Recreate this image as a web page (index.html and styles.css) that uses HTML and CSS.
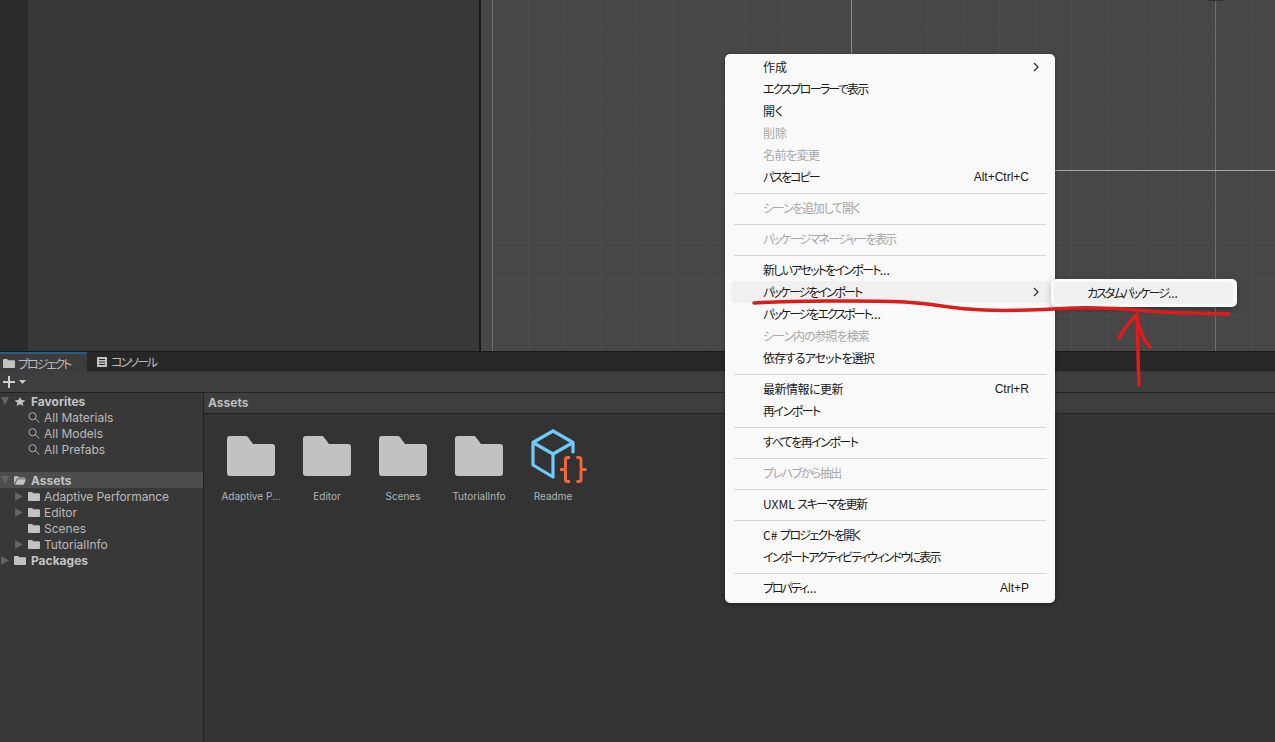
FILE: index.html
```html
<!DOCTYPE html>
<html lang="ja">
<head>
    <meta charset="UTF-8">
    <title>Unity - パッケージをインポート</title>
    <link rel="stylesheet" href="styles.css">
</head>
<body>

    <svg width="0" height="0" class="defs">
        <symbol id="folder" viewBox="0 0 12 9"><path d="M1 0h3.200l1.100 1.300H11a1 1 0 0 1 1 1V8a1 1 0 0 1-1 1H1a1 1 0 0 1-1-1V1a1 1 0 0 1 1-1z"/></symbol>
        <symbol id="folder-big" viewBox="0 0 48 40"><path d="M3 0h15.500a3 3 0 0 1 2.500 1.300L26 8h19a3 3 0 0 1 3 3v26a3 3 0 0 1-3 3H3a3 3 0 0 1-3-3V3a3 3 0 0 1 3-3z"/></symbol>
        <symbol id="search" viewBox="0 0 12 11"><circle cx="4.500" cy="4.200" r="3.600" fill="none" stroke="currentColor"/><path d="M7.200 6.800l4.300 3.800" fill="none" stroke="currentColor"/></symbol>
        <symbol id="caret-right" viewBox="0 0 8 9"><path d="M0 0l8 4.500-8 4.500z"/></symbol>
        <symbol id="caret-down" viewBox="0 0 8 8"><path d="M0 0h8L4 8z"/></symbol>
        <symbol id="caret-small" viewBox="0 0 7 4"><path d="M0 0h7L3.500 4z"/></symbol>
        <symbol id="chevron" viewBox="0 0 7 10"><path d="M1 1l4 4-4 4" fill="none" stroke="currentColor" stroke-width="1.300"/></symbol>
    </svg>

    <!-- top: hierarchy + scene -->
    <div class="top">
        <div class="strip"></div>
        <div class="hierarchy"></div>
        <div class="scene"></div>
    </div>

    <!-- bottom: project window -->
    <div class="bottom">
        <div class="tabs">
            <div class="tab active">
                <svg class="tab-icon"><use href="#folder"/></svg>
                <span>プロジェクト</span>
            </div>
            <div class="tab">
                <svg class="tab-icon doc" viewBox="0 0 10 10"><path d="M0 0h10v10H0z" fill="currentColor"/><path d="M2 2.500h6M2 5h6M2 7.500h6" stroke="#282828"/></svg>
                <span>コンソール</span>
            </div>
        </div>
        <div class="toolbar">
            <svg class="plus" viewBox="0 0 12 12"><path d="M6 0v12M0 6h12" stroke="currentColor" stroke-width="2"/></svg>
            <svg class="drop"><use href="#caret-small"/></svg>
        </div>
        <div class="browser">
            <div class="sidebar">
                <div class="row top-row">
                    <svg class="caret down"><use href="#caret-down"/></svg>
                    <svg class="icon" viewBox="0 0 12 10"><path d="M6 0l1.800 3.400 4.200.4-3.100 2.700.9 3.500L6 8.100 2.200 10l.9-3.500L0 3.800l4.200-.4z"/></svg>
                    <span class="bold">Favorites</span>
                </div>
                <div class="row sub"><span class="caret"></span><svg class="icon search"><use href="#search"/></svg><span>All Materials</span></div>
                <div class="row sub"><span class="caret"></span><svg class="icon search"><use href="#search"/></svg><span>All Models</span></div>
                <div class="row sub"><span class="caret"></span><svg class="icon search"><use href="#search"/></svg><span>All Prefabs</span></div>

                <div class="row top-row selected group">
                    <svg class="caret down"><use href="#caret-down"/></svg>
                    <svg class="icon" viewBox="0 0 13 9"><path d="M1 0h3.200l1.100 1.300H11a1 1 0 0 1 1 1H3.200L0 8.500V1a1 1 0 0 1 1-1z"/><path d="M3.800 3.200H13L10.500 9H.9z"/></svg>
                    <span class="bold">Assets</span>
                </div>
                <div class="row sub">
                    <svg class="caret"><use href="#caret-right"/></svg>
                    <svg class="icon"><use href="#folder"/></svg>
                    <span class="tight">Adaptive Performance</span>
                </div>
                <div class="row sub">
                    <svg class="caret"><use href="#caret-right"/></svg>
                    <svg class="icon"><use href="#folder"/></svg>
                    <span>Editor</span>
                </div>
                <div class="row sub"><span class="caret"></span><svg class="icon"><use href="#folder"/></svg><span>Scenes</span></div>
                <div class="row sub">
                    <svg class="caret"><use href="#caret-right"/></svg>
                    <svg class="icon"><use href="#folder"/></svg>
                    <span>TutorialInfo</span>
                </div>
                <div class="row top-row">
                    <svg class="caret"><use href="#caret-right"/></svg>
                    <svg class="icon"><use href="#folder"/></svg>
                    <span class="bold">Packages</span>
                </div>
            </div>
            <div class="main">
                <div class="crumb">Assets</div>
                <div class="grid">
                    <div class="cell"><svg class="big"><use href="#folder-big"/></svg><span>Adaptive P...</span></div>
                    <div class="cell"><svg class="big"><use href="#folder-big"/></svg><span>Editor</span></div>
                    <div class="cell"><svg class="big"><use href="#folder-big"/></svg><span>Scenes</span></div>
                    <div class="cell"><svg class="big"><use href="#folder-big"/></svg><span>TutorialInfo</span></div>
                    <div class="cell">
                        <svg class="big readme" viewBox="0 0 80 70">
                            <path d="M33 11L13 22.500V45L33 57V34L13 22.500M33 34L53 22.500 33 11M53 22.500V32" fill="none" stroke="#6fcbfb" stroke-width="3.200" stroke-linejoin="round" stroke-linecap="round"/>
                            <path d="M50 37.500h-2.500q-2 0-2 2v8q0 2-2 2h-3.500h3.500q2 0 2 2v8q0 2 2 2h2.500M56.500 37.500h2.500q2 0 2 2v8q0 2 2 2h3.500h-3.500q-2 0-2 2v8q0 2-2 2h-2.500" fill="none" stroke="#f4663a" stroke-width="3"/>
                        </svg>
                        <span class="readme-label">Readme</span>
                    </div>
                </div>
            </div>
        </div>
    </div>

    <!-- context menu -->
    <div class="menu">
        <div class="item"><span>作成</span><svg class="chev"><use href="#chevron"/></svg></div>
        <div class="item"><span class="ls18">エクスプローラーで表示</span></div>
        <div class="item"><span>開く</span></div>
        <div class="item off"><span>削除</span></div>
        <div class="item off"><span class="ls05">名前を変更</span></div>
        <div class="item"><span class="ls20">パスをコピー</span><span class="key">Alt+Ctrl+C</span></div>
        <div class="sep"></div>
        <div class="item off"><span class="ls12">シーンを追加して開く</span></div>
        <div class="sep"></div>
        <div class="item off"><span class="ls18">パッケージマネージャーを表示</span></div>
        <div class="sep"></div>
        <div class="item"><span class="ls18">新しいアセットをインポート<span class="plain">...</span></span></div>
        <div class="item hover"><span class="ls20">パッケージをインポート</span><svg class="chev"><use href="#chevron"/></svg></div>
        <div class="item"><span class="ls20">パッケージをエクスポート<span class="plain">...</span></span></div>
        <div class="item off"><span class="ls10">シーン内の参照を検索</span></div>
        <div class="item"><span class="ls10">依存するアセットを選択</span></div>
        <div class="sep"></div>
        <div class="item"><span class="ls05">最新情報に更新</span><span class="key">Ctrl+R</span></div>
        <div class="item"><span class="ls15">再インポート</span></div>
        <div class="sep"></div>
        <div class="item"><span class="ls15">すべてを再インポート</span></div>
        <div class="sep"></div>
        <div class="item off"><span class="ls15">プレハブから抽出</span></div>
        <div class="sep"></div>
        <div class="item"><span class="ls15"><span class="plain">UXML </span>スキーマを更新</span></div>
        <div class="sep"></div>
        <div class="item"><span class="ls18"><span class="plain">C# </span>プロジェクトを開く</span></div>
        <div class="item"><span class="ls18">インポートアクティビティウィンドウに表示</span></div>
        <div class="sep"></div>
        <div class="item"><span class="ls20">プロパティ<span class="plain">...</span></span><span class="key">Alt+P</span></div>
    </div>

    <div class="submenu">
        <div class="item hover"><span class="ls20">カスタムパッケージ<span class="plain">...</span></span></div>
    </div>

    <!-- hand drawn annotation -->
    <svg class="scribble" viewBox="0 0 1275 742">
        <path d="M754 303C790 301 860 300 905 302C935 304 950 308 968 309C1000 312 1040 310 1074 308C1100 307 1120 309 1138 310C1160 313 1200 313 1229 314" />
        <path d="M1137 314C1138 340 1138 365 1139 385" />
        <path d="M1119 338C1125 328 1131 320 1136 315C1139 325 1141 338 1150 347" />
    </svg>

</body>
</html>
```

FILE: styles.css
```css
html, body {
    margin: 0;
    height: 100%;
    overflow: hidden;
}
body {
    display: flex;
    flex-direction: column;
    background-color: #333333;
    font-family: Inter, "Liberation Sans", sans-serif;
    font-size: 12px;
    color: #c0c0c0;
}
.defs {
    position: absolute;
}

/* top area */
.top {
    display: flex;
    height: 351px;
    flex-shrink: 0;
}
.strip {
    width: 28px;
    background-color: #2b2b2b;
}
.hierarchy {
    width: 451px;
    background-color: #383838;
}
.scene {
    flex: 1;
    border-left: 2px solid #191919;
    background-color: #474747;
    background-image:
        linear-gradient(#a8a8a8, #a8a8a8),
        linear-gradient(#333333, #333333),
        linear-gradient(90deg, #8a8a8a 1px, transparent 1px),
        linear-gradient(90deg, #6e6e6e 1px, transparent 1px),
        linear-gradient(90deg, #6e6e6e 1px, transparent 1px),
        linear-gradient(90deg, #4d4d4d 1px, transparent 1px),
        linear-gradient(#4d4d4d 1px, transparent 1px);
    background-size:
        424px 1px,
        16px 1px,
        1px 100%,
        1px 100%,
        1px 100%,
        36.2px 36.2px,
        36.2px 36.2px;
    background-position:
        370px 170px,
        726px 0,
        370px 0,
        11px 0,
        734px 0,
        11px 0,
        0 25px;
    background-repeat: no-repeat, no-repeat, no-repeat, no-repeat, no-repeat, repeat, repeat;
}

/* project window */
.bottom {
    flex: 1;
    display: flex;
    flex-direction: column;
    min-height: 0;
    border-top: 1px solid #191919;
}
.tabs {
    display: flex;
    height: 19px;
    background-color: #282828;
    border-bottom: 1px solid #3a3a3a;
}
.tab {
    display: flex;
    align-items: center;
    height: 19px;
    font-family: "Noto Sans CJK JP", sans-serif;
    font-feature-settings: "palt";
    font-size: 12px;
    letter-spacing: -2px;
    color: #bdbdbd;
}
.tab.active {
    width: 87px;
    box-sizing: border-box;
    border-top: 2px solid #2c5d87;
    background-color: #3c3c3c;
    height: 20px;
    padding-left: 3px;
}
.tab:not(.active) {
    padding-left: 10px;
}
.tab-icon {
    width: 12px;
    height: 9px;
    margin-right: 3px;
    fill: #c2c2c2;
}
.tab-icon.doc {
    width: 10px;
    height: 10px;
    margin-right: 4px;
    color: #c2c2c2;
}
.toolbar {
    display: flex;
    align-items: center;
    height: 20px;
    padding-left: 3px;
    background-color: #3e3e3e;
    border-bottom: 1px solid #232323;
    color: #d0d0d0;
}
.plus {
    width: 12px;
    height: 12px;
}
.drop {
    width: 7px;
    height: 4px;
    margin-left: 4px;
    fill: #c8c8c8;
}
.browser {
    flex: 1;
    display: flex;
    min-height: 0;
}

/* tree */
.sidebar {
    width: 203px;
    flex-shrink: 0;
    background-color: #383838;
    border-right: 1px solid #232323;
}
.row {
    display: flex;
    align-items: center;
    height: 16px;
    line-height: 16px;
    color: #b8b8b8;
}
.row > span:last-child {
    padding-top: 2px;
}
.row.top-row {
    padding-left: 1px;
}
.row.sub {
    padding-left: 15px;
}
.row.group {
    margin-top: 15px;
}
.row.selected {
    background-color: #4d4d4d;
}
.caret {
    width: 8px;
    height: 9px;
    margin-right: 5px;
    fill: #646464;
    flex-shrink: 0;
}
.caret.down {
    height: 8px;
}
.icon {
    width: 12px;
    height: 9px;
    margin-right: 5px;
    fill: #c2c2c2;
    flex-shrink: 0;
}
.row.sub .icon {
    margin-right: 4px;
}
.icon.search {
    height: 11px;
    color: #b0b0b0;
}
.tight {
    letter-spacing: -0.1px;
}
.bold {
    font-weight: 700;
    color: #c4c4c4;
}

/* assets view */
.main {
    flex: 1;
    min-width: 0;
}
.crumb {
    height: 20px;
    line-height: 20px;
    padding-left: 4px;
    font-weight: 700;
    color: #bdbdbd;
    background-color: #3e3e3e;
    border-bottom: 1px solid #232323;
}
.grid {
    display: flex;
    padding: 22px 0 0 9px;
}
.cell {
    width: 76px;
    display: flex;
    flex-direction: column;
    align-items: center;
    font-size: 10px;
    color: #b4b4b4;
}
.big {
    width: 48px;
    height: 40px;
    margin-bottom: 14px;
    fill: #c2c2c2;
}
.big.readme {
    width: 80px;
    height: 70px;
    margin: -16px 0 0 10px;
}
.readme-label {
    margin-right: 4px;
}

/* context menu */
.menu, .submenu {
    position: absolute;
    background-color: #f9f9f9;
    border-radius: 5px;
    font-family: "Noto Sans CJK JP", sans-serif;
    font-feature-settings: "palt";
    font-size: 12px;
    color: #1a1a1a;
}
.menu {
    left: 725px;
    top: 54px;
    width: 330px;
    box-sizing: border-box;
    padding: 2px 0 4px;
    box-shadow: 0 1px 4px rgba(0, 0, 0, 0.35);
}
.submenu {
    left: 1051px;
    top: 279px;
    width: 186px;
    box-sizing: border-box;
    padding: 3px 4px 3px 3px;
    box-shadow: 0 2px 6px rgba(0, 0, 0, 0.3);
}
.item {
    display: flex;
    align-items: center;
    justify-content: space-between;
    box-sizing: border-box;
    height: 22px;
    margin: 0 6px;
    padding: 0 20px 2px 32px;
    border-radius: 4px;
    white-space: nowrap;
}
.item.off {
    color: #a8a8a8;
}
.item.hover {
    background-color: #f0f0f0;
}
.submenu .item {
    margin: 0;
    padding-left: 33px;
}
.ls05 { letter-spacing: -0.5px; }
.ls10 { letter-spacing: -1px; }
.ls12 { letter-spacing: -1.25px; }
.ls15 { letter-spacing: -1.5px; }
.ls18 { letter-spacing: -1.75px; }
.ls20 { letter-spacing: -2px; }
.plain {
    letter-spacing: 0;
}
.key {
    margin-top: 2px;
    font-family: "Liberation Sans", sans-serif;
}
.chev {
    width: 7px;
    height: 10px;
    margin: 2px -11px 0 0;
    color: #333333;
}
.sep {
    height: 1px;
    margin: 5px 9px 3px;
    background-color: #d4d4d4;
}

/* red marker */
.scribble {
    position: absolute;
    left: 0;
    top: 0;
    width: 1275px;
    height: 742px;
    pointer-events: none;
}
.scribble path {
    fill: none;
    stroke: #e01b1b;
    stroke-width: 3.5;
    stroke-linecap: round;
    stroke-linejoin: round;
}
```
